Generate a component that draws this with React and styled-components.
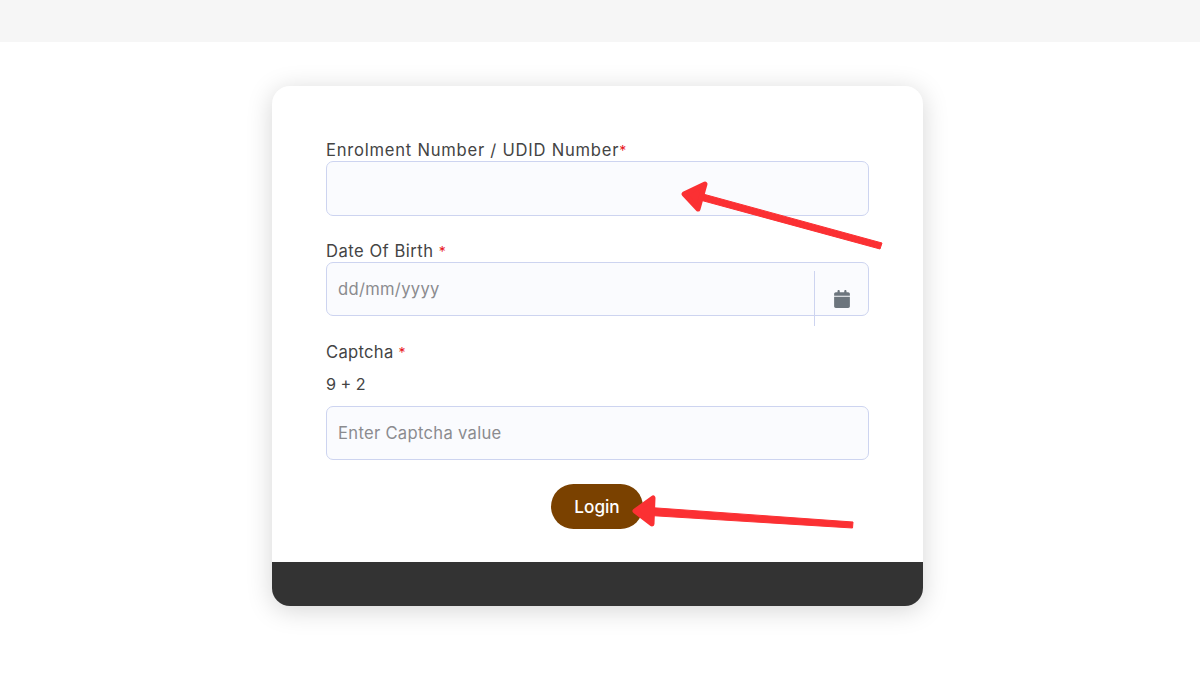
import React from "react";
import styled, { createGlobalStyle } from "styled-components";

const Global = createGlobalStyle`
  html, body { margin: 0; padding: 0; background: #fff; }
  body { font-family: Inter, "Open Sans", "Liberation Sans", sans-serif; }
  * { box-sizing: border-box; }
`;
const Page = styled.div`
  position: relative;
  width: 1200px;
  height: 675px;
  overflow: hidden;
  background: #fff;
`;
const TopBar = styled.div`
  height: 42px;
  background: #f6f6f6;
`;
const Main = styled.main`
  display: flex;
  justify-content: center;
  padding: 44px 5px 0 0;
`;
const Card = styled.div`
  width: 651px;
  height: 520px;
  background: #fff;
  border-radius: 18px;
  overflow: hidden;
  box-shadow: 0 4px 26px rgba(0, 0, 0, 0.17);
  display: flex;
  flex-direction: column;
`;
const Form = styled.form`
  flex: 1;
  padding: 53px 54px 0;
  display: flex;
  flex-direction: column;
`;
const Field = styled.div`
  display: flex;
  flex-direction: column;
  margin-bottom: ${(p) => p.$gap}px;
`;
const Label = styled.label`
  font-size: 16.6px;
  line-height: 22px;
  height: 22px;
  color: #444;
  letter-spacing: ${(p) => p.$track}px;
  white-space: nowrap;
`;
const Star = styled.span`
  color: #e8141c;
  font-size: 14px;
  letter-spacing: 0;
`;
const Sum = styled.div`
  font-size: 16.2px;
  line-height: 22px;
  color: #444;
  margin: 10px 0 11px;
`;
const InputBox = styled.div`
  position: relative;
  height: ${(p) => p.$h}px;
  background: #fafbfe;
  border: 1px solid #cdd4f0;
  border-radius: 7px;
`;
const Input = styled.input`
  width: 100%;
  height: 100%;
  border: 0;
  outline: 0;
  background: transparent;
  padding: 0 11px;
  font: inherit;
  font-size: 16.6px;
  letter-spacing: 0.3px;
  color: #444;
  &::placeholder { color: #8b8b8f; opacity: 1; }
`;
const Divider = styled.div`
  position: absolute;
  left: 487px;
  top: 8px;
  width: 1px;
  height: 55px;
  background: #cdd4f0;
`;
const CalIcon = styled.svg`
  position: absolute;
  left: 507px;
  top: 27px;
  width: 16px;
  height: 18px;
`;
const ButtonRow = styled.div`
  display: flex;
  justify-content: center;
  margin-top: 24px;
  padding-right: 1px;
`;
const LoginButton = styled.button`
  width: 92px;
  height: 45px;
  border: 0;
  border-radius: 23px;
  background: #7a4100;
  color: #fff;
  font: inherit;
  font-size: 17.2px;
  font-weight: 500;
`;
const Footer = styled.div`
  height: 44px;
  background: #333333;
`;
const Arrow = styled.svg`
  position: absolute;
  left: 0;
  top: 0;
  width: 1200px;
  height: 675px;
  pointer-events: none;
`;

export default function App() {
  return (
    <Page>
      <Global />
      <TopBar />
      <Main>
        <Card>
          <Form onSubmit={(e) => e.preventDefault()}>
            <Field $gap={24}>
              <Label $track={0.76}>Enrolment Number / UDID Number<Star>*</Star></Label>
              <InputBox $h={55}><Input aria-label="Enrolment Number" /></InputBox>
            </Field>
            <Field $gap={25}>
              <Label $track={0.5}>Date Of Birth <Star>*</Star></Label>
              <InputBox $h={54}>
                <Input placeholder="dd/mm/yyyy" aria-label="Date Of Birth" />
                <Divider />
                <CalIcon viewBox="0 0 448 512" fill="#6c757d">
                  <path d="M96 32c0-18 14-32 32-32s32 14 32 32v32h128V32c0-18 14-32 32-32s32 14 32 32v32h48c26 0 48 22 48 48v48H0v-48c0-26 22-48 48-48h48V32zM448 192v272c0 26-22 48-48 48H48c-26 0-48-22-48-48V192h448z" />
                </CalIcon>
              </InputBox>
            </Field>
            <Field $gap={0}>
              <Label $track={0.3}>Captcha <Star>*</Star></Label>
              <Sum>9 + 2</Sum>
              <InputBox $h={54}><Input placeholder="Enter Captcha value" aria-label="Captcha" /></InputBox>
            </Field>
            <ButtonRow><LoginButton type="submit">Login</LoginButton></ButtonRow>
          </Form>
          <Footer />
        </Card>
      </Main>
      <Arrow viewBox="0 0 1200 675">
        <g fill="#fb3033" stroke="#fb3033" strokeLinejoin="round">
          <polygon points="882,243 880,249 700,200 703,194" strokeWidth="1" />
          <polygon points="684,194 705,184 698,209" strokeWidth="5" />
          <polygon points="853,522 852.5,528 650,515.5 650,507.5" strokeWidth="1" />
          <polygon points="635,511 653,498 652,524" strokeWidth="5" />
        </g>
      </Arrow>
    </Page>
  );
}
